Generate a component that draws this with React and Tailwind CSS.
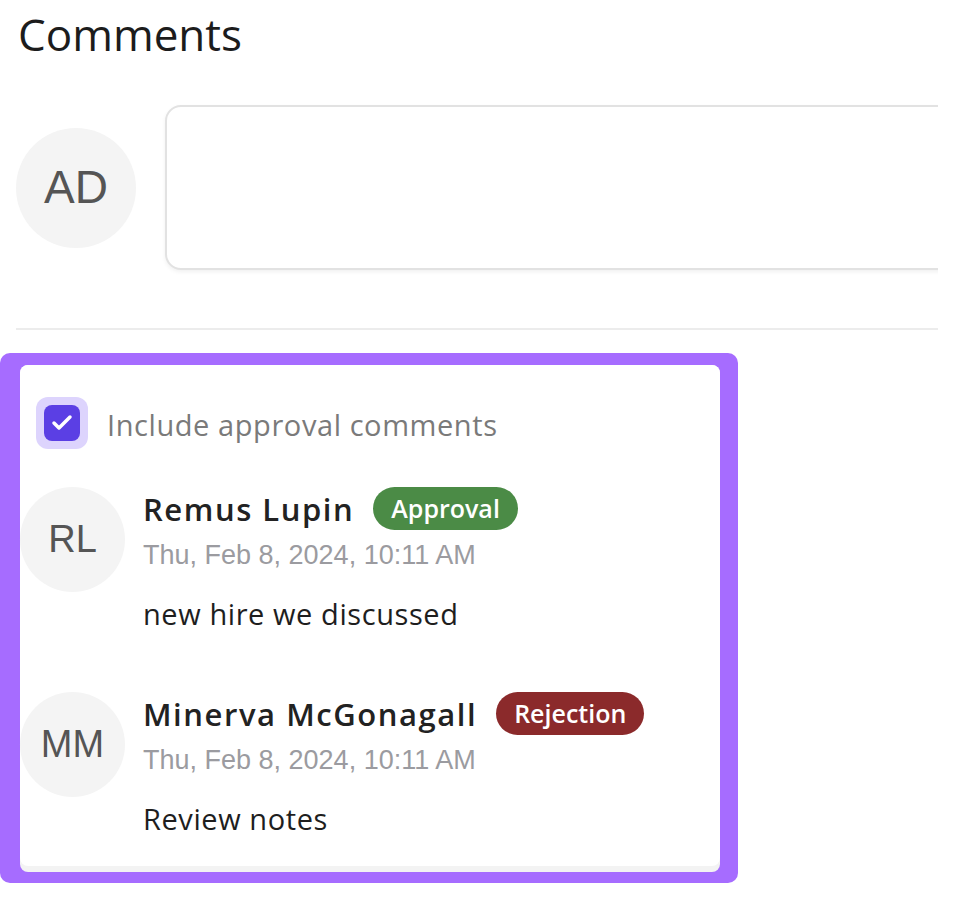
import { Check } from "lucide-react";

const comments = [
  {
    initials: "RL",
    name: "Remus Lupin",
    tag: "Approval",
    tagClass: "bg-[#4b8b46]",
    date: "Thu, Feb 8, 2024, 10:11 AM",
    text: "new hire we discussed",
  },
  {
    initials: "MM",
    name: "Minerva McGonagall",
    tag: "Rejection",
    tagClass: "bg-[#8b2a2b]",
    date: "Thu, Feb 8, 2024, 10:11 AM",
    text: "Review notes",
  },
];

export default function App() {
  return (
    <div className="w-[960px] h-[898px] bg-white overflow-hidden font-['Open_Sans',sans-serif]">
      <div className="w-[938px] pl-4 overflow-hidden">
        <h1 className="pt-[10px] pl-[2px] text-[44px] leading-[48px] font-medium text-[#1c1c1c]">
          Comments
        </h1>

        {/* Новый комментарий */}
        <div className="mt-[47px] flex items-center gap-[29px]">
          <Avatar initials="AD" size="w-[120px] h-[120px]" text="text-[46px]" />
          <div className="shrink-0 w-[900px] h-[165px] rounded-[16px] border-2 border-[#e2e2e2] shadow-[0_2px_4px_rgba(0,0,0,0.06)] bg-white" />
        </div>

        <div className="mt-[58px] h-[2px] bg-[#ececec]" />
      </div>

      {/* Блок с комментариями */}
      <div className="mt-[23px] w-[738px] rounded-[10px] bg-[#a66cff] pl-[20px] pt-[12px] pr-[18px] pb-[11px]">
        <div className="rounded-[8px] bg-[#f3f3f3] pb-[6px]">
          <div className="rounded-[8px] bg-white pt-[32px] pb-[29px]">
            <label className="flex items-center gap-[19px] pl-[16px]">
              <span className="w-[52px] h-[52px] rounded-[12px] bg-[#ddd4fd] flex items-center justify-center">
                <span className="w-[36px] h-[36px] rounded-[8px] bg-[#5b3fe4] flex items-center justify-center">
                  <Check className="w-[24px] h-[24px] text-white" strokeWidth={3.5} />
                </span>
              </span>
              <span className="pt-[4px] text-[29px] leading-[36px] tracking-[0.02em] text-[#7a7a7a]">
                Include approval comments
              </span>
            </label>

            <div className="mt-[38px] flex flex-col gap-[60px]">
              {comments.map((c) => (
                <div key={c.initials} className="flex items-start gap-[18px]">
                  <Avatar initials={c.initials} size="w-[105px] h-[105px]" text="text-[38px]" />
                  <div className="flex flex-col">
                    <div className="flex items-center gap-[19px] h-[43px]">
                      <span className="text-[31px] leading-[40px] font-semibold tracking-[0.05em] text-[#222]">
                        {c.name}
                      </span>
                      <span
                        className={`h-[43px] px-[18px] rounded-full text-[25px] leading-[43px] font-semibold text-white ${c.tagClass}`}
                      >
                        {c.tag}
                      </span>
                    </div>
                    <span className="mt-[10px] text-[27px] leading-[30px] text-[#9b9ba0] font-['Liberation_Sans',sans-serif]">
                      {c.date}
                    </span>
                    <span className="mt-[26px] text-[29px] leading-[36px] tracking-[0.02em] text-[#1e1e1e]">
                      {c.text}
                    </span>
                  </div>
                </div>
              ))}
            </div>
          </div>
        </div>
      </div>
    </div>
  );
}

const Avatar = ({ initials, size, text }) => (
  <div
    className={`${size} shrink-0 rounded-full bg-[#f4f4f4] flex items-center justify-center ${text} text-[#555] font-['Liberation_Sans',sans-serif]`}
  >
    {initials}
  </div>
);
